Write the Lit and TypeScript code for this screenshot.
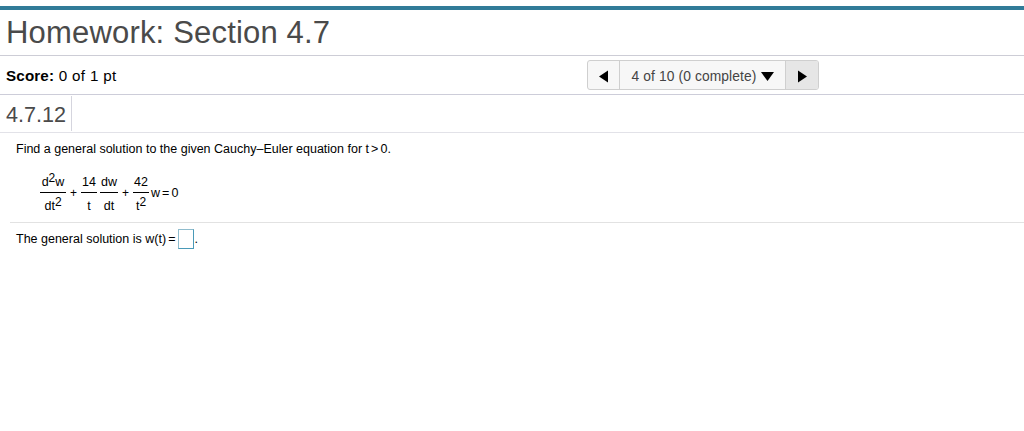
import { css, html, LitElement, TemplateResult } from "lit";
import { customElement, property } from "lit/decorators.js";

@customElement("question-nav")
export class QuestionNav extends LitElement {
  @property({ type: Number }) current = 1;
  @property({ type: Number }) total = 1;
  @property({ type: Number }) complete = 0;

  static styles = css`
    :host {
      display: block;
    }

    .nav {
      display: flex;
      box-sizing: border-box;
      width: 232px;
      height: 30px;
      overflow: hidden;
      background: #f7f7f7;
      border: 1px solid #cfcfcf;
      border-radius: 3px;
    }

    .cell {
      display: flex;
      align-items: center;
      justify-content: center;
      box-sizing: border-box;
      padding-top: 2px;
    }

    .prev {
      width: 32px;
      border-right: 1px solid #cfcfcf;
    }

    .label {
      flex: 1;
      gap: 4px;
      font-size: 13.8px;
      letter-spacing: 0.12px;
      white-space: nowrap;
      color: #444;
    }

    .next {
      width: 33px;
      background: #e6e6e6;
      border-left: 1px solid #cfcfcf;
    }

    svg {
      display: block;
      fill: #000;
    }
  `;

  render() {
    return html`
      <div class="nav">
        <div class="cell prev">
          <svg width="9" height="13" viewBox="0 0 9 13">
            <path d="M9 0.5V12.5L0 6.5z" />
          </svg>
        </div>
        <div class="cell label">
          <span>${this.current} of ${this.total} (${this.complete} complete)</span>
          <svg width="13" height="9" viewBox="0 0 13 9">
            <path d="M0 0H13L6.5 9z" />
          </svg>
        </div>
        <div class="cell next">
          <svg width="9" height="13" viewBox="0 0 9 13">
            <path d="M0 0.5V12.5L9 6.5z" />
          </svg>
        </div>
      </div>
    `;
  }
}

@customElement("app-root")
export class AppRoot extends LitElement {
  static styles = css`
    :host {
      display: block;
      height: 431px;
      overflow: hidden;
      background: #fff;
      color: #000;
      font-family: "Liberation Sans", Arial, sans-serif;
    }

    .accent {
      height: 4px;
      margin-top: 6px;
      background: #317b98;
    }

    .title {
      box-sizing: border-box;
      height: 46px;
      padding-left: 6px;
      border-bottom: 1px solid #cdcdd6;
      font-size: 31px;
      line-height: 45px;
      letter-spacing: 0.18px;
      color: #4a4a4a;
    }

    .status {
      display: flex;
      align-items: center;
      box-sizing: border-box;
      height: 39px;
      padding-left: 6px;
      border-bottom: 1px solid #cdcdd9;
    }

    .score {
      width: 581px;
      font-size: 15.2px;
      letter-spacing: 0.33px;
    }

    .score b {
      letter-spacing: 0.15px;
    }

    .exercise {
      display: flex;
      box-sizing: border-box;
      height: 38px;
      padding: 1px 0;
      border-bottom: 1px solid #e2e2e8;
    }

    .number {
      box-sizing: border-box;
      width: 72px;
      padding-left: 6px;
      border-right: 1px solid #d5d5de;
      font-size: 21.6px;
      line-height: 37px;
      color: #4a4a4a;
    }

    .problem {
      box-sizing: border-box;
      height: 90px;
      margin-left: 10px;
      padding: 9px 0 0 6px;
      border-bottom: 1px solid #e2e2e2;
      font-size: 12.5px;
      line-height: 15px;
    }

    .prompt,
    .answer {
      white-space: pre;
    }

    .tight {
      word-spacing: -1.4px;
    }

    .equation {
      display: flex;
      align-items: center;
      height: 40px;
      margin: 16px 0 0 24px;
    }

    .frac {
      display: flex;
      flex-direction: column;
      text-align: center;
      white-space: nowrap;
    }

    .top,
    .bottom {
      box-sizing: border-box;
      height: 20px;
    }

    .top {
      border-bottom: 1px solid #000;
      line-height: 18px;
    }

    .bottom {
      line-height: 26px;
    }

    .wide {
      width: 26px;
    }

    .narrow {
      width: 16px;
    }

    .medium {
      width: 18px;
      margin-left: 3px;
    }

    .op {
      width: 15px;
      text-align: center;
      font-size: 12px;
    }

    .tail {
      margin-left: 2px;
    }

    sup {
      position: relative;
      top: -4px;
      font-size: 12px;
      line-height: 0;
      vertical-align: baseline;
    }

    .answer {
      display: flex;
      align-items: center;
      margin: 6px 0 0 16px;
      font-size: 12.5px;
    }

    .blank {
      box-sizing: border-box;
      width: 16px;
      height: 20px;
      margin-left: 3px;
      border: 1px solid #4a9ab8;
      border-top-color: #8fbccd;
      border-left-color: #8fbccd;
    }
  `;

  fraction(width: string, top: TemplateResult, bottom: TemplateResult) {
    return html`
      <div class="frac ${width}">
        <div class="top">${top}</div>
        <div class="bottom">${bottom}</div>
      </div>
    `;
  }

  render() {
    return html`
      <div class="accent"></div>
      <div class="title">Homework: Section 4.7</div>
      <div class="status">
        <div class="score"><b>Score:</b> 0 of 1 pt</div>
        <question-nav current="4" total="10" complete="0"></question-nav>
      </div>
      <div class="exercise">
        <div class="number">4.7.12</div>
      </div>
      <div class="problem">
        <div class="prompt">Find a general solution to the given Cauchy–Euler equation for <span class="tight">t &gt; 0.</span></div>
        <div class="equation">
          ${this.fraction("wide", html`d<sup>2</sup>w`, html`dt<sup>2</sup>`)}
          <span class="op">+</span>
          ${this.fraction("narrow", html`14`, html`t`)}
          ${this.fraction("medium", html`dw`, html`dt`)}
          <span class="op">+</span>
          ${this.fraction("narrow", html`42`, html`t<sup>2</sup>`)}
          <span class="tail tight">w = 0</span>
        </div>
      </div>
      <div class="answer"><span>The general solution is w(t)<span class="tight"> =</span></span><span class="blank"></span><span>.</span></div>
    `;
  }
}
